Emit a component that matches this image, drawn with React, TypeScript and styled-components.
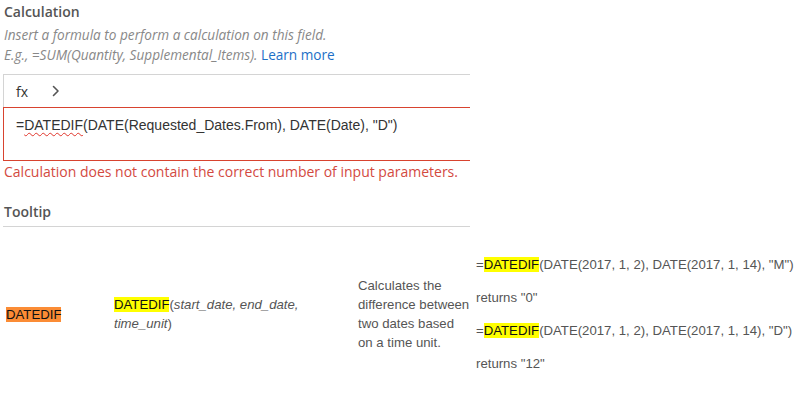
import React from 'react';
import styled, {createGlobalStyle} from 'styled-components';

const GlobalStyle = createGlobalStyle`
  html, body {
    margin: 0;
    padding: 0;
    background: #fff;
  }
  body {
    font-family: "Open Sans", "Liberation Sans", Arial, sans-serif;
  }
`

const Page = styled.div`
  padding: 3px 0 0 3px;
`

const Section = styled.div`
  width: 467px;
`

const Heading = styled.div`
  font-size: 14px;
  font-weight: 600;
  color: #555;
  line-height: 18px;
  padding-left: 1px;
`

const HintBlock = styled.div`
  margin-top: 4px;
`

const Hint = styled.div`
  font-size: 13.6px;
  font-style: italic;
  color: #888;
  line-height: 20px;
  padding-left: 1px;
`

const Link = styled.a`
  font-style: normal;
  color: #1d6fc7;
  text-decoration: none;
`

const Editor = styled.div`
  margin-top: 9px;
`

const Toolbar = styled.div`
  display: flex;
  align-items: center;
  gap: 24px;
  height: 32px;
  padding-left: 12px;
  border-top: 1px solid #d4d4d4;
  border-left: 1px solid #d4d4d4;
  font-size: 14px;
  color: #333;
`

const FormulaInput = styled.div<{ $invalid?: boolean }>`
  height: 54px;
  border: 1px solid ${p => p.$invalid ? '#d8432f' : '#d4d4d4'};
  border-right: none;
  padding: 7px 0 0 12px;
  box-sizing: border-box;
  font-family: "Liberation Sans", Arial, sans-serif;
  font-size: 14px;
  color: #333;
  line-height: 20px;
`

const Misspelled = styled.span`
  text-decoration: underline wavy #e0352b;
  text-decoration-thickness: 1px;
  text-underline-offset: 2px;
`

const ErrorText = styled.div`
  font-size: 14px;
  color: #d34a3f;
  line-height: 22px;
  padding-left: 1px;
`

const SubHeading = styled(Heading)`
  margin-top: 20px;
  padding-bottom: 5px;
  border-bottom: 1px solid #d4d4d4;
`

const TooltipRow = styled.div`
  display: grid;
  grid-template-columns: 108px 244px 118px 1fr;
  align-items: center;
  padding: 28px 0 20px 3px;
  font-family: "Liberation Sans", Arial, sans-serif;
  font-size: 13.2px;
  line-height: 19px;
  color: #555;
`

const Cell = styled.div<{ $width?: number }>`
  ${p => p.$width ? `max-width: ${p.$width}px;` : ''}
`

const Mark = styled.span<{ $tone: 'orange' | 'yellow' }>`
  background: ${p => p.$tone === 'orange' ? '#fb8c35' : '#ffff00'};
  color: #111;
`

const Args = styled.span`
  font-style: italic;
`

const Example = styled.p`
  margin: 0 0 14px;
  white-space: nowrap;
  &:last-child {
    margin-bottom: 0;
  }
`

const Chevron = () => (
  <svg width="8" height="12" viewBox="0 0 8 12" fill="none">
    <polyline points="1.5,1.5 6,6 1.5,10.5" stroke="#555" strokeWidth="1.6" strokeLinecap="round" strokeLinejoin="round"/>
  </svg>
)

const examples = [
  {code: <>=<Mark $tone="yellow">DATEDIF</Mark>(DATE(2017, 1, 2), DATE(2017, 1, 14), "M")</>},
  {code: <>returns "0"</>},
  {code: <>=<Mark $tone="yellow">DATEDIF</Mark>(DATE(2017, 1, 2), DATE(2017, 1, 14), "D")</>},
  {code: <>returns "12"</>},
]

export default function App() {
  return (
    <Page>
      <GlobalStyle/>
      <Section>
        <Heading>Calculation</Heading>
        <HintBlock>
          <Hint>Insert a formula to perform a calculation on this field.</Hint>
          <Hint>E.g., =SUM(Quantity, Supplemental_Items). <Link href="#">Learn more</Link></Hint>
        </HintBlock>
        <Editor>
          <Toolbar>
            <span>fx</span>
            <Chevron/>
          </Toolbar>
          <FormulaInput $invalid>
            =<Misspelled>DATEDIF</Misspelled>(DATE(Requested_Dates.From), DATE(Date), "D")
          </FormulaInput>
        </Editor>
        <ErrorText>Calculation does not contain the correct number of input parameters.</ErrorText>
        <SubHeading>Tooltip</SubHeading>
      </Section>
      <TooltipRow>
        <Cell><Mark $tone="orange">DATEDIF</Mark></Cell>
        <Cell $width={228}><Mark $tone="yellow">DATEDIF</Mark>(<Args>start_date, end_date, time_unit</Args>)</Cell>
        <Cell $width={113}>Calculates the difference between two dates based on a time unit.</Cell>
        <Cell>
          {examples.map((e, i) => <Example key={i}>{e.code}</Example>)}
        </Cell>
      </TooltipRow>
    </Page>
  );
}
